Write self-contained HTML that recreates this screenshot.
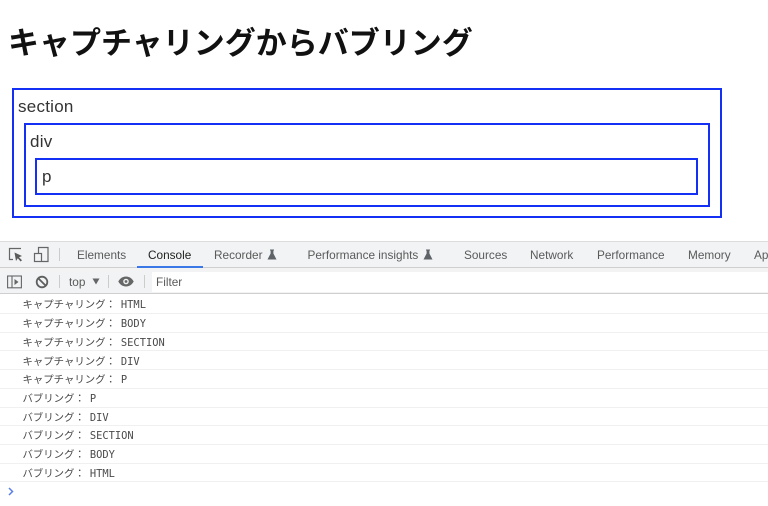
<!DOCTYPE html>
<html lang="ja"><head><meta charset="utf-8"><title>キャプチャリングからバブリング</title>
<style>
html,body{margin:0;padding:0;background:#fff}
body{width:768px;height:506px;overflow:hidden;position:relative;font-family:"Liberation Sans","Noto Sans CJK JP",sans-serif;color:#222}
#w{position:absolute;left:0;top:0;width:768px;height:506px;overflow:hidden;filter:blur(.3px)}
.a{position:absolute;white-space:nowrap}
h1{position:absolute;left:8px;top:20px;margin:0;font:700 31px/42px "Noto Sans CJK JP",sans-serif;color:#111;white-space:nowrap}
.b{position:absolute;box-sizing:border-box;border:2px solid #1530f5}
.l{position:absolute;font-size:17px;line-height:22px;letter-spacing:.25px;color:#333}
.tab{position:absolute;top:248px;font-size:11.8px;line-height:14px;color:#5a5a5a;white-space:nowrap}
.r{position:absolute;left:0;width:768px;height:18.7px;box-sizing:border-box;border-bottom:1px solid #f0f0f0;font:10.4px/20px "DejaVu Sans Mono","Noto Sans CJK JP",monospace;color:#4a4a4a;padding-left:22.5px;white-space:nowrap}
.r span{margin-left:5px}
.sep{position:absolute;width:1px;background:#ccc}
svg{position:absolute}
</style></head><body><div id="w">
<h1>キャプチャリングからバブリング</h1>
<div class="b" style="left:12px;top:88px;width:709.5px;height:130px"></div>
<div class="l" style="left:18px;top:96px">section</div>
<div class="b" style="left:23.5px;top:123px;width:686.5px;height:83.5px"></div>
<div class="l" style="left:30px;top:131px">div</div>
<div class="b" style="left:35px;top:158px;width:663px;height:36.5px"></div>
<div class="l" style="left:42px;top:166px">p</div>

<div class="a" style="left:0;top:241px;width:768px;height:27px;box-sizing:border-box;background:#f1f3f4;border-top:1px solid #dcdcdc;border-bottom:1px solid #cfcfcf"></div>
<div class="a" style="left:0;top:268px;width:768px;height:3px;background:#f3f3f3"></div>
<div class="a" style="left:0;top:271px;width:768px;height:23px;box-sizing:border-box;background:#f1f3f4;border-bottom:1px solid #cfcfcf"></div>
<div class="a" style="left:137px;top:266px;width:66px;height:2px;background:#3b78e7"></div>

<svg style="left:8px;top:247px" width="16" height="16" viewBox="0 0 16 16" fill="none"><path d="M13 1.5H1.5V12.5H5" stroke="#666" stroke-width="1.2"/><path d="M6.5 5.5L14 9L11 10.2L14 13.3L12.6 14.5L9.8 11.3L8 14Z" fill="#5a5a5a"/></svg>
<svg style="left:33px;top:246px" width="16" height="17" viewBox="0 0 16 17" fill="none" stroke="#666" stroke-width="1.2"><path d="M5.5 7V1.5H15V15.5H9"/><rect x="1.5" y="7.5" width="7" height="8"/></svg>
<div class="sep" style="left:59px;top:248px;height:13px"></div>
<div class="tab" style="left:77px">Elements</div>
<div class="tab" style="left:148px;color:#222">Console</div>
<div class="tab" style="left:214px">Recorder</div>
<svg style="left:267px;top:249px" width="10" height="11" viewBox="0 0 10 11"><path d="M3 0.5H7V1.5H6.4V4.5L9.5 10.5H0.5L3.6 4.5V1.5H3Z" fill="#5f6368"/></svg>
<div class="tab" style="left:307.5px">Performance insights</div>
<svg style="left:423px;top:249px" width="10" height="11" viewBox="0 0 10 11"><path d="M3 0.5H7V1.5H6.4V4.5L9.5 10.5H0.5L3.6 4.5V1.5H3Z" fill="#5f6368"/></svg>
<div class="tab" style="left:464px">Sources</div>
<div class="tab" style="left:530px">Network</div>
<div class="tab" style="left:597px">Performance</div>
<div class="tab" style="left:688px">Memory</div>
<div class="tab" style="left:754px">Ap</div>

<svg style="left:7px;top:275px" width="15" height="14" viewBox="0 0 15 14" fill="none"><rect x="0.6" y="1" width="13.8" height="11.8" stroke="#666" stroke-width="1.1"/><path d="M5 1V13" stroke="#666" stroke-width="1.1"/><path d="M7.5 4L11.5 7L7.5 10Z" fill="#666"/></svg>
<svg style="left:35px;top:275px" width="14" height="14" viewBox="0 0 14 14" fill="none" stroke="#5f5f5f" stroke-width="1.8"><circle cx="7" cy="7" r="5.3"/><path d="M3.2 3.2L10.8 10.8"/></svg>
<div class="sep" style="left:59px;top:275px;height:13px"></div>
<div class="a" style="left:69px;top:275px;font-size:11.8px;line-height:14px;color:#5a5a5a">top</div>
<svg style="left:92px;top:278px" width="8" height="7" viewBox="0 0 8 7"><path d="M0.5 0.5H7.5L4 6.5Z" fill="#666"/></svg>
<div class="sep" style="left:108px;top:275px;height:13px"></div>
<svg style="left:118px;top:276px" width="16" height="11" viewBox="0 0 16 11"><path fill-rule="evenodd" d="M0.3 5.5C2 2.2 4.8 0.5 8 0.5S14 2.2 15.7 5.5C14 8.8 11.2 10.5 8 10.5S2 8.8 0.3 5.5ZM8 2.7A2.8 2.8 0 1 0 8 8.3A2.8 2.8 0 1 0 8 2.7Z" fill="#666"/><circle cx="8" cy="5.5" r="1.4" fill="#666"/></svg>
<div class="sep" style="left:144px;top:275px;height:13px"></div>
<div class="a" style="left:152px;top:272px;width:616px;height:20px;background:#fff"></div>
<div class="a" style="left:156px;top:275px;font-size:11.8px;line-height:14px;color:#5a5a5a">Filter</div>

<div class="r" style="top:295.4px">キャプチャリング：<span>HTML</span></div>
<div class="r" style="top:314.1px">キャプチャリング：<span>BODY</span></div>
<div class="r" style="top:332.8px">キャプチャリング：<span>SECTION</span></div>
<div class="r" style="top:351.5px">キャプチャリング：<span>DIV</span></div>
<div class="r" style="top:370.2px">キャプチャリング：<span>P</span></div>
<div class="r" style="top:388.9px">バブリング：<span>P</span></div>
<div class="r" style="top:407.6px">バブリング：<span>DIV</span></div>
<div class="r" style="top:426.3px">バブリング：<span>SECTION</span></div>
<div class="r" style="top:445px">バブリング：<span>BODY</span></div>
<div class="r" style="top:463.7px">バブリング：<span>HTML</span></div>
<svg style="left:8px;top:487px" width="6" height="9" viewBox="0 0 6 9" fill="none"><path d="M1 1L4.5 4.5L1 8" stroke="#5b7fe8" stroke-width="1.5"/></svg>
</div></body></html>
